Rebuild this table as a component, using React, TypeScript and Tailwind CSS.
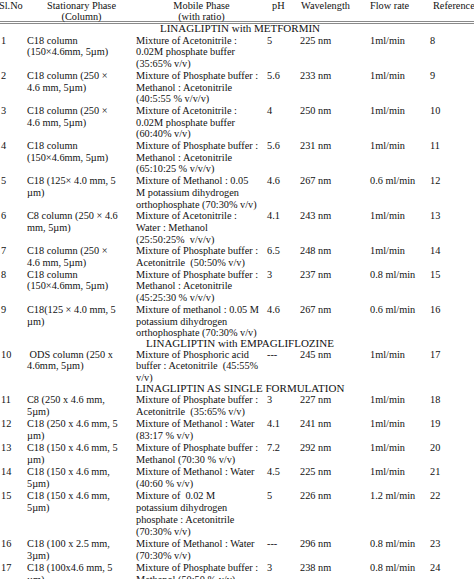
type Row = {
  no: string;
  column: string[];
  mobile: string[];
  ph: string;
  wave: string;
  flow: string;
  ref: string;
};

type Item = { section: string } | Row;

const ITEMS: Item[] = [
  { section: "LINAGLIPTIN with METFORMIN" },
  { no: "1", column: ["C18 column", "(150×4.6mm, 5µm)"], mobile: ["Mixture of Acetonitrile :", "0.02M phosphate buffer", "(35:65% v/v)"], ph: "5", wave: "225 nm", flow: "1ml/min", ref: "8" },
  { no: "2", column: ["C18 column (250 ×", "4.6 mm, 5µm)"], mobile: ["Mixture of Phosphate buffer :", "Methanol : Acetonitrile", "(40:5:55 % v/v/v)"], ph: "5.6", wave: "233 nm", flow: "1ml/min", ref: "9" },
  { no: "3", column: ["C18 column (250 ×", "4.6 mm, 5µm)"], mobile: ["Mixture of Acetonitrile :", "0.02M phosphate buffer", "(60:40% v/v)"], ph: "4", wave: "250 nm", flow: "1ml/min", ref: "10" },
  { no: "4", column: ["C18 column", "(150×4.6mm, 5µm)"], mobile: ["Mixture of Phosphate buffer :", "Methanol : Acetonitrile", "(65:10:25 % v/v/v)"], ph: "5.6", wave: "231 nm", flow: "1ml/min", ref: "11" },
  { no: "5", column: ["C18 (125× 4.0 mm, 5", "µm)"], mobile: ["Mixture of Methanol : 0.05", "M potassium dihydrogen", "orthophosphate (70:30% v/v)"], ph: "4.6", wave: "267 nm", flow: "0.6 ml/min", ref: "12" },
  { no: "6", column: ["C8 column (250 × 4.6", "mm, 5µm)"], mobile: ["Mixture of Acetonitrile :", "Water : Methanol", "(25:50:25%  v/v/v)"], ph: "4.1", wave: "243 nm", flow: "1ml/min", ref: "13" },
  { no: "7", column: ["C18 column (250 ×", "4.6 mm, 5µm)"], mobile: ["Mixture of Phosphate buffer :", "Acetonitrile  (50:50% v/v)"], ph: "6.5", wave: "248 nm", flow: "1ml/min", ref: "14" },
  { no: "8", column: ["C18 column", "(150×4.6mm, 5µm)"], mobile: ["Mixture of Phosphate buffer :", "Methanol : Acetonitrile", "(45:25:30 % v/v/v)"], ph: "3", wave: "237 nm", flow: "0.8 ml/min", ref: "15" },
  { no: "9", column: ["C18(125 × 4.0 mm, 5", "µm)"], mobile: ["Mixture of methanol : 0.05 M", "potassium dihydrogen", "orthophosphate (70:30% v/v)"], ph: "4.6", wave: "267 nm", flow: "0.6 ml/min", ref: "16" },
  { section: "LINAGLIPTIN with EMPAGLIFLOZINE" },
  { no: "10", column: [" ODS column (250 x", "4.6mm, 5µm)"], mobile: ["Mixture of Phosphoric acid", "buffer : Acetonitrile  (45:55%", "v/v)"], ph: "---", wave: "245 nm", flow: "1ml/min", ref: "17" },
  { section: "LINAGLIPTIN AS SINGLE FORMULATION" },
  { no: "11", column: ["C8 (250 x 4.6 mm,", "5µm)"], mobile: ["Mixture of Phosphate buffer :", "Acetonitrile  (35:65% v/v)"], ph: "3", wave: "227 nm", flow: "1ml/min", ref: "18" },
  { no: "12", column: ["C18 (250 x 4.6 mm, 5", "µm)"], mobile: ["Mixture of Methanol : Water", "(83:17 % v/v)"], ph: "4.1", wave: "241 nm", flow: "1ml/min", ref: "19" },
  { no: "13", column: ["C18 (150 x 4.6 mm, 5", "µm)"], mobile: ["Mixture of Phosphate buffer :", "Methanol (70:30 % v/v)"], ph: "7.2", wave: "292 nm", flow: "1ml/min", ref: "20" },
  { no: "14", column: ["C18 (150 x 4.6 mm,", "5µm)"], mobile: ["Mixture of Methanol : Water", "(40:60 % v/v)"], ph: "4.5", wave: "225 nm", flow: "1ml/min", ref: "21" },
  { no: "15", column: ["C18 (150 x 4.6 mm,", "5µm)"], mobile: ["Mixture of  0.02 M", "potassium dihydrogen", "phosphate : Acetonitrile", "(70:30% v/v)"], ph: "5", wave: "226 nm", flow: "1.2 ml/min", ref: "22" },
  { no: "16", column: ["C18 (100 x 2.5 mm,", "3µm)"], mobile: ["Mixture of Methanol : Water", "(70:30% v/v)"], ph: "---", wave: "296 nm", flow: "0.8 ml/min", ref: "23" },
  { no: "17", column: ["C18 (100x4.6 mm, 5", "µm)"], mobile: ["Mixture of Phosphate buffer :", "Methanol (50:50 % v/v)"], ph: "3", wave: "238 nm", flow: "0.8 ml/min", ref: "24" },
];

const GRID = "grid grid-cols-[27px_109px_131px_33px_70px_60px_50px]";

function Lines({ lines }: { lines: string[] }) {
  return (
    <div>
      {lines.map((l, i) => (
        <div key={i} className="whitespace-pre">
          {l}
        </div>
      ))}
    </div>
  );
}

export default function App() {
  return (
    <div className="w-[474px] h-[579px] overflow-hidden bg-white">
      <div
        className="w-[480px] text-[10.3px] leading-[11.7px] text-[#111]"
        style={{ fontFamily: '"Liberation Serif", "Times New Roman", serif' }}
      >
        {/* Header */}
        <div className={`${GRID} leading-[11px] h-[21px]`}>
          <div className="-ml-[1px]">Sl.No</div>
          <div className="text-center">
            <div>Stationary Phase</div>
            <div>(Column)</div>
          </div>
          <div className="text-center">
            <div>Mobile Phase</div>
            <div>(with ratio)</div>
          </div>
          <div className="pl-[5px]">pH</div>
          <div className="pl-[1px]">Wavelength</div>
          <div>Flow rate</div>
          <div className="pl-[3px] whitespace-nowrap">Reference</div>
        </div>
        <div className="h-[3px] border-t border-b border-[#8a8a8a]" />

        {ITEMS.map((item, i) =>
          "section" in item ? (
            <div
              key={i}
              className={`text-center text-[11px] whitespace-nowrap ${i === 0 ? "-mt-[1.5px] mb-[0.5px]" : "-mt-[1px] mb-[-1px]"}`}
            >
              {item.section}
            </div>
          ) : (
            <div key={i} className={`${GRID} ${i > 12 ? "leading-[12px]" : ""}`}>
              <div className="pl-[1px]">{item.no}</div>
              <Lines lines={item.column} />
              <Lines lines={item.mobile} />
              <div>{item.ph}</div>
              <div>{item.wave}</div>
              <div>{item.flow}</div>
              <div>{item.ref}</div>
            </div>
          )
        )}
      </div>
    </div>
  );
}
